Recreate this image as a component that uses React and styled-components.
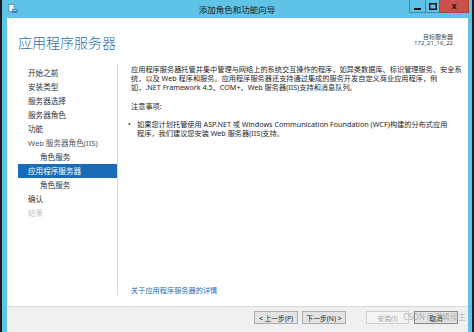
import styled, { createGlobalStyle } from "styled-components";

const GlobalStyle = createGlobalStyle`
  html, body {
    margin: 0;
    padding: 0;
    background: #1d1d1f;
  }
  body {
    font-family: "Noto Sans", "Noto Sans CJK SC", sans-serif;
  }
`;

const Window = styled.div`
  margin-left: 2px;
  width: 470px;
  height: 332px;
  background: #5fc3e8;
  display: flex;
  flex-direction: column;
  position: relative;
  overflow: hidden;
`;

const TitleBar = styled.div`
  height: 18px;
  display: flex;
  align-items: center;
  justify-content: center;
  position: relative;
  font-family: "Noto Sans CJK SC", sans-serif;
  font-size: 8.5px;
  color: #1a1a1a;
`;

const AppIcon = styled.svg`
  position: absolute;
  left: 6px;
  top: 4px;
`;

const Controls = styled.div`
  position: absolute;
  top: 0;
  right: 3px;
  display: flex;
`;

const CtrlButton = styled.div`
  width: ${(p) => p.$w}px;
  height: 13px;
  display: flex;
  align-items: center;
  justify-content: center;
  background: ${(p) => (p.$close ? "#c8524b" : "transparent")};
  box-sizing: border-box;
  border: 1px solid ${(p) => (p.$close ? "#b2443e" : "#3b8db0")};
  border-top: none;
  margin-left: -1px;
  font-family: "DejaVu Sans", sans-serif;
  font-weight: bold;
  font-size: 8px;
  color: #1a1a1a;
`;

const Client = styled.div`
  flex: 1;
  margin: 0 4px 0 5px;
  background: #fff;
  display: flex;
  flex-direction: column;
  min-height: 0;
  min-width: 0;
`;

const Header = styled.div`
  height: 42px;
  box-sizing: border-box;
  padding: 15.5px 15px 0 11px;
  display: flex;
  justify-content: space-between;
  align-items: flex-start;
`;

const Heading = styled.div`
  font-family: "Noto Sans CJK SC", sans-serif;
  font-size: 14px;
  line-height: 17px;
  font-weight: 300;
  color: #2c6da7;
`;

const Target = styled.div`
  text-align: right;
  font-size: 6px;
  line-height: 6.6px;
  color: #444;
`;

const Main = styled.div`
  flex: 1;
  display: flex;
  min-height: 0;
`;

const Nav = styled.div`
  flex: none;
  width: 111px;
  box-sizing: border-box;
  margin: 4px 0 11px;
  padding-top: 2px;
  border-right: 1px solid #d9d9d9;
  display: flex;
  flex-direction: column;
`;

const NavItem = styled.div`
  height: 14px;
  line-height: 14px;
  margin-left: 11px;
  padding-left: ${(p) => (p.$indent ? 22 : 10)}px;
  font-size: 7.6px;
  white-space: nowrap;
  color: ${(p) =>
    p.$active ? "#fff" : p.$disabled ? "#c4c4c4" : p.$muted ? "#555" : "#333"};
  background: ${(p) => (p.$active ? "#1a6cb6" : "transparent")};
`;

const Content = styled.div`
  flex: 1;
  min-width: 0;
  padding: 5px 0 11px 13px;
  display: flex;
  flex-direction: column;
  font-size: 7.2px;
  line-height: 9.2px;
  color: #262626;
`;

const Para = styled.p`
  margin: 0 0 9.2px;
  white-space: nowrap;
`;

const BulletRow = styled.div`
  display: flex;
  white-space: nowrap;
  margin-left: -3px;
`;

const Dot = styled.span`
  width: 9px;
  flex: none;
`;

const MoreLink = styled.a`
  margin-top: auto;
  color: #1e6fb4;
  text-decoration: none;
  font-size: 7.2px;
`;

const Footer = styled.div`
  height: 26px;
  box-sizing: border-box;
  border-top: 1px solid #d8d8d8;
  background: #f0f0f0;
  display: flex;
  justify-content: flex-end;
  align-items: flex-start;
  padding: 4px 10px 0 0;
`;

const Button = styled.div`
  width: ${(p) => p.$w || 44}px;
  height: 13px;
  box-sizing: border-box;
  margin-left: ${(p) => p.$gap || 0}px;
  border: 1px solid ${(p) => (p.$disabled ? "#cfcfcf" : p.$focus ? "#8a8a8a" : "#adadad")};
  background: ${(p) => (p.$disabled ? "#f4f4f4" : "#e3e3e3")};
  color: ${(p) => (p.$disabled ? "#a8a8a8" : "#222")};
  font-size: 6.8px;
  display: flex;
  align-items: center;
  justify-content: center;
  white-space: nowrap;
`;

const Watermark = styled.div`
  position: absolute;
  right: 6px;
  bottom: 10px;
  font-size: 8px;
  color: rgba(150, 150, 150, 0.7);
  white-space: nowrap;
  pointer-events: none;
`;

const navItems = [
  { label: "开始之前" },
  { label: "安装类型" },
  { label: "服务器选择" },
  { label: "服务器角色" },
  { label: "功能" },
  { label: "Web 服务器角色(IIS)", muted: true },
  { label: "角色服务", indent: true },
  { label: "应用程序服务器", active: true },
  { label: "角色服务", indent: true },
  { label: "确认" },
  { label: "结果", disabled: true },
];

export default function App() {
  return (
    <>
      <GlobalStyle />
      <Window>
        <TitleBar>
          <AppIcon width="10" height="10" viewBox="0 0 10 10">
            <rect x="1" y="0.5" width="5" height="7" fill="#f4f4f4" stroke="#6b7c88" strokeWidth="0.7" />
            <rect x="4" y="5" width="5.5" height="4" fill="#3a7fc0" />
            <rect x="4.8" y="5.8" width="3.8" height="0.8" fill="#dbe9f6" />
          </AppIcon>
          添加角色和功能向导
          <Controls>
            <CtrlButton $w={17}>
              <svg width="7" height="7" viewBox="0 0 7 7">
                <rect x="0" y="5" width="7" height="2" fill="#1a1a1a" />
              </svg>
            </CtrlButton>
            <CtrlButton $w={15}>
              <svg width="8" height="7" viewBox="0 0 8 7">
                <rect x="0.75" y="0.75" width="6.5" height="5.5" fill="none" stroke="#1a1a1a" strokeWidth="1.5" />
              </svg>
            </CtrlButton>
            <CtrlButton $w={30} $close>
              x
            </CtrlButton>
          </Controls>
        </TitleBar>
        <Client>
          <Header>
            <Heading>应用程序服务器</Heading>
            <Target>
              目标服务器
              <br />
              172_21_16_22
            </Target>
          </Header>
          <Main>
            <Nav>
              {navItems.map((item, i) => (
                <NavItem
                  key={i}
                  $indent={item.indent}
                  $active={item.active}
                  $disabled={item.disabled}
                  $muted={item.muted}
                >
                  {item.label}
                </NavItem>
              ))}
            </Nav>
            <Content>
              <Para>
                应用程序服务器托管并集中管理与网络上的系统交互操作的程序，如异类数据库、标识管理服务、安全系
                <br />
                统，以及 Web 程序和服务。应用程序服务器还支持通过集成的服务开发自定义商业应用程序，例
                <br />
                如，.NET Framework 4.5、COM+、Web 服务器(IIS)支持和消息队列。
              </Para>
              <Para>注意事项:</Para>
              <BulletRow>
                <Dot>•</Dot>
                <div>
                  如果您计划托管使用 ASP.NET 或 Windows Communication Foundation (WCF)构建的分布式应用
                  <br />
                  程序，我们建议您安装 Web 服务器(IIS)支持。
                </div>
              </BulletRow>
              <MoreLink href="#">关于应用程序服务器的详情</MoreLink>
            </Content>
          </Main>
          <Footer>
            <Button>&lt; 上一步(P)</Button>
            <Button $gap={4}>下一步(N) &gt;</Button>
            <Button $gap={20} $w={43} $disabled>
              安装(I)
            </Button>
            <Button $gap={5} $focus>
              取消
            </Button>
          </Footer>
        </Client>
        <Watermark>CSDN @逻辑侯主</Watermark>
      </Window>
    </>
  );
}
